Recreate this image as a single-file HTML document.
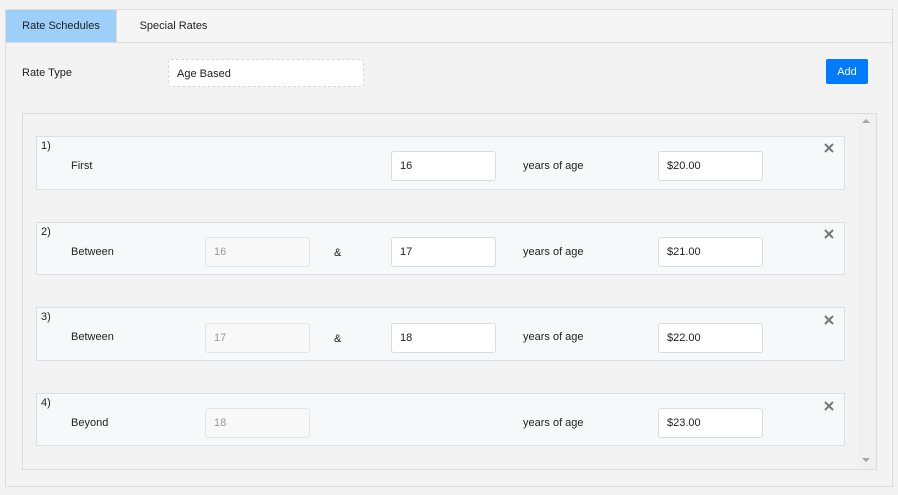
<!DOCTYPE html>
<html><head><meta charset="utf-8"><style>
*{box-sizing:border-box;margin:0;padding:0}
body{width:898px;height:495px;background:#f3f3f3;font-family:"Liberation Sans","DejaVu Sans",sans-serif;font-size:11px;color:#222;position:relative;overflow:hidden}
.a{position:absolute}
.panel{left:5px;top:9px;width:888px;height:478px;border:1px solid #dcdcdc;background:#f3f3f3}
.tabs{left:6px;top:10px;width:886px;height:33px;border-bottom:1px solid #dcdcdc;background:#f5f5f5}
.tab{top:10px;height:32px;line-height:32px;text-align:center;font-size:11px}
.inp{height:30px;border:1px solid #dcdcdc;border-radius:3px;background:#fff;padding-left:8px;line-height:29px;font-size:11px}
.dis{background:#f8f8f9;color:#999;border-color:#e4e4e4}
.row{left:36px;width:809px;border:1px solid #dcdfe3;background:#f7f8fa}
.t{margin-top:1px}
</style></head><body>
<div class="a panel"></div>
<div class="a tabs"></div>
<div class="a tab" style="left:6px;width:111px;background:#9dcff8;border-right:1px solid #dcdcdc">Rate Schedules</div>
<div class="a tab" style="left:117px;width:113px">Special Rates</div>
<div class="a" style="left:22px;top:67px">Rate Type</div>
<div class="a" style="left:168px;top:59px;width:196px;height:28px;border:1px dashed #d6d6d6;border-radius:3px;background:#fff;padding-left:8px;line-height:28px">Age Based</div>
<div class="a" style="left:826px;top:59px;width:42px;height:25px;background:#007bff;border-radius:2px;color:#fff;text-align:center;line-height:26px">Add</div>
<div class="a" style="left:22px;top:113px;width:855px;height:357px;border:1px solid #dcdcdc;background:#f3f3f3"></div>
<div class="a" style="left:858px;top:114px;width:18px;height:355px;background:#f0f0f0"></div>
<div class="a" style="left:862px;top:119px;width:0;height:0;border-left:4px solid transparent;border-right:4px solid transparent;border-bottom:4px solid #a6a6a6"></div>
<div class="a" style="left:862px;top:458px;width:0;height:0;border-left:4px solid transparent;border-right:4px solid transparent;border-top:4px solid #a6a6a6"></div>

<svg width="0" height="0" style="position:absolute"><defs><symbol id="x" viewBox="0 0 10 10"><path d="M1 1L9 9M9 1L1 9" stroke="#777" stroke-width="2"/></symbol></defs></svg>

<div class="a row" style="top:136px;height:54px"></div>
<div class="a" style="left:41px;top:140px">1)</div>
<div class="a" style="left:71px;top:160px">First</div>
<div class="a inp" style="left:391px;top:151px;width:105px">16</div>
<div class="a" style="left:523px;top:160px">years of age</div>
<div class="a inp" style="left:658px;top:151px;width:105px">$20.00</div>
<svg class="a" style="left:824px;top:143px" width="10" height="10"><use href="#x"/></svg>

<div class="a row" style="top:222px;height:53px"></div>
<div class="a" style="left:41px;top:226px">2)</div>
<div class="a" style="left:71px;top:246px">Between</div>
<div class="a inp dis" style="left:205px;top:237px;width:105px">16</div>
<div class="a" style="left:334px;top:247px">&amp;</div>
<div class="a inp" style="left:391px;top:237px;width:105px">17</div>
<div class="a" style="left:523px;top:246px">years of age</div>
<div class="a inp" style="left:658px;top:237px;width:105px">$21.00</div>
<svg class="a" style="left:824px;top:229px" width="10" height="10"><use href="#x"/></svg>

<div class="a row" style="top:307px;height:54px"></div>
<div class="a" style="left:41px;top:311px">3)</div>
<div class="a" style="left:71px;top:331px">Between</div>
<div class="a inp dis" style="left:205px;top:323px;width:105px">17</div>
<div class="a" style="left:334px;top:333px">&amp;</div>
<div class="a inp" style="left:391px;top:323px;width:105px">18</div>
<div class="a" style="left:523px;top:331px">years of age</div>
<div class="a inp" style="left:658px;top:323px;width:105px">$22.00</div>
<svg class="a" style="left:824px;top:315px" width="10" height="10"><use href="#x"/></svg>

<div class="a row" style="top:393px;height:53px"></div>
<div class="a" style="left:41px;top:397px">4)</div>
<div class="a" style="left:71px;top:417px">Beyond</div>
<div class="a inp dis" style="left:205px;top:408px;width:105px">18</div>
<div class="a" style="left:523px;top:417px">years of age</div>
<div class="a inp" style="left:658px;top:408px;width:105px">$23.00</div>
<svg class="a" style="left:824px;top:401px" width="10" height="10"><use href="#x"/></svg>
</body></html>
